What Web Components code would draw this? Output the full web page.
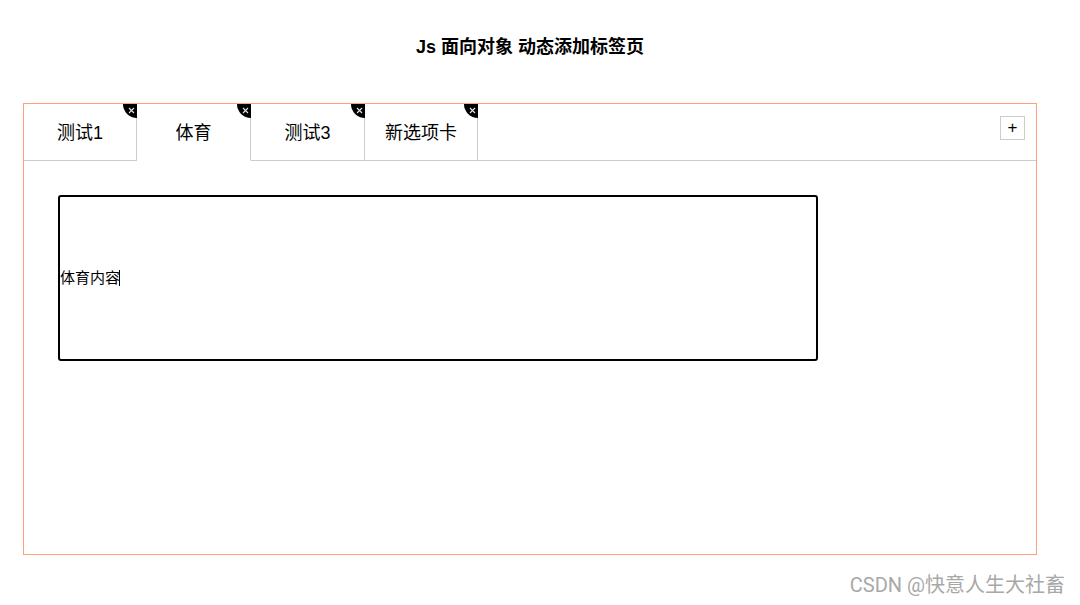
<!DOCTYPE html>
<html lang="zh">
<head>
<meta charset="utf-8">
<title>Js 面向对象 动态添加标签页</title>
<style>
    html, body {
        margin: 0;
        height: 605px;
        overflow: hidden;
        background-color: #ffffff;
        font-family: "Liberation Sans", "Noto Sans CJK SC", sans-serif;
        color: #000000;
    }
</style>
</head>
<body>
<demo-page>
    <tab-box>
        <tab-item slot="tabs" short>测试1</tab-item>
        <tab-item slot="tabs" active>体育</tab-item>
        <tab-item slot="tabs">测试3</tab-item>
        <tab-item slot="tabs" short>新选项卡</tab-item>
        <tab-panel>体育内容</tab-panel>
    </tab-box>
</demo-page>

<script>
class DemoPage extends HTMLElement {
  constructor() {
    super();
    this.attachShadow({ mode: "open" });
    this.shadowRoot.innerHTML = `
<style>
    :host {
        display: block;
    }
    h1 {
        margin: 0;
        width: 1060px;
        height: 103px;
        padding-top: 37px;
        box-sizing: border-box;
        text-align: center;
        font-size: 18px;
        line-height: 21px;
        font-weight: 700;
    }
    .mark {
        margin: 19px 15px 0 0;
        text-align: right;
        font-family: Roboto, "Noto Sans CJK SC", sans-serif;
        font-size: 20px;
        line-height: 22px;
        color: #a8a8a8;
    }
</style>
<h1>Js 面向对象 动态添加标签页</h1>
<slot></slot>
<div class="mark">CSDN @快意人生大社畜</div>
`;
  }
}

class TabBox extends HTMLElement {
  constructor() {
    super();
    this.attachShadow({ mode: "open" });
    this.shadowRoot.innerHTML = `
<style>
    :host {
        display: block;
        box-sizing: border-box;
        width: 1014px;
        height: 452px;
        margin-left: 23px;
        border: 1px solid #ffa07a;
    }
    .bar {
        display: flex;
        justify-content: space-between;
        height: 57px;
        box-sizing: border-box;
        border-bottom: 1px solid #cccccc;
    }
    .tabs {
        display: flex;
    }
    .add {
        box-sizing: border-box;
        width: 25px;
        height: 24px;
        margin: 12px 11px 0 0;
        border: 1px solid #cccccc;
        text-align: center;
        font-size: 17px;
        line-height: 22px;
        user-select: none;
    }
</style>
<div class="bar">
    <div class="tabs"><slot name="tabs"></slot></div>
    <div class="add">+</div>
</div>
<slot></slot>
`;
  }
}

class TabItem extends HTMLElement {
  constructor() {
    super();
    this.attachShadow({ mode: "open" });
    this.shadowRoot.innerHTML = `
<style>
    :host {
        display: block;
        position: relative;
        box-sizing: border-box;
        width: 114px;
        height: 57px;
        border-right: 1px solid #cccccc;
        border-bottom: 1px solid #cccccc;
        text-align: center;
        font-size: 18px;
        line-height: 58px;
    }
    :host([short]) {
        width: 113px;
    }
    :host([active]) {
        border-bottom-color: #ffffff;
    }
    .close {
        position: absolute;
        top: 0;
        right: -1px;
        width: 14px;
        height: 14px;
        background-color: #000000;
        border-bottom-left-radius: 100%;
    }
    svg {
        position: absolute;
        top: 3px;
        left: 5px;
        display: block;
    }
</style>
<slot></slot>
<span class="close">
    <svg width="7" height="7" viewBox="0 0 7 7"><path d="M1 1l5 5M6 1L1 6" stroke="#e4e4e4" stroke-width="1.1" fill="none"/></svg>
</span>
`;
  }
}

class TabPanel extends HTMLElement {
  constructor() {
    super();
    this.attachShadow({ mode: "open" });
    this.shadowRoot.innerHTML = `
<style>
    :host {
        display: block;
        padding: 34px 0 0 34px;
    }
    .input {
        display: flex;
        align-items: center;
        box-sizing: border-box;
        width: 760px;
        height: 166px;
        border: 2px solid #000000;
        border-radius: 3px;
        font-size: 15px;
        line-height: 16px;
    }
    .caret {
        width: 1px;
        height: 16px;
        margin-left: -1px;
        background-color: #000000;
    }
</style>
<div class="input"><slot></slot><span class="caret"></span></div>
`;
  }
}

customElements.define("demo-page", DemoPage);
customElements.define("tab-box", TabBox);
customElements.define("tab-item", TabItem);
customElements.define("tab-panel", TabPanel);
</script>
</body>
</html>
